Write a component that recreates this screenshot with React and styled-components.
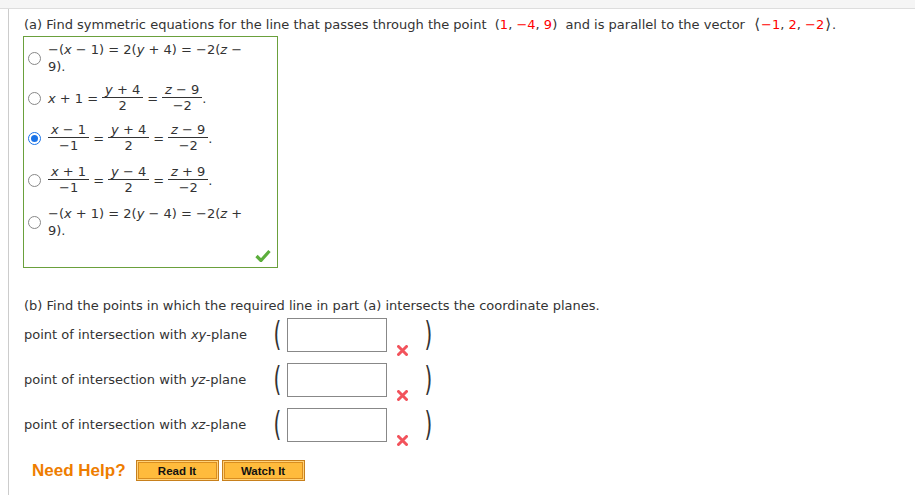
import React from 'react';
import styled, { createGlobalStyle } from 'styled-components';

const GlobalStyle = createGlobalStyle`
  body {
    margin: 0;
    background: #fff;
    font-family: 'DejaVu Sans', Verdana, sans-serif;
    font-size: 13px;
    color: #333;
  }
`;

const TopStrip = styled.div`
  height: 8px;
  background: #f5f5f5;
  border-bottom: 1px solid #ddd;
`;

const Main = styled.div`
  margin-left: 8px;
  border-left: 1px solid #ccc;
  padding: 7px 0 14px 15px;
`;

const Prompt = styled.div`
  line-height: 17px;
  margin-bottom: 3px;
  .red {
    color: #f00;
  }
  .angle {
    font-size: 15px;
    padding: 0 1px;
  }
`;

const ChoiceBox = styled.div`
  width: 250px;
  height: 227px;
  margin-left: -1px;
  border: 1px solid #6aa03c;
  padding: 3px 0 0 3px;
  position: relative;
`;

const Choice = styled.div`
  display: flex;
  align-items: center;
  min-height: ${(p) => p.h}px;
  margin-top: ${(p) => p.gap}px;
`;

const Radio = styled.span`
  flex: none;
  width: 11px;
  height: 11px;
  border-radius: 50%;
  border: 1px solid ${(p) => (p.checked ? '#1a73e8' : '#888')};
  background: #fff;
  margin: 0 7px 0 1px;
  position: relative;
  ${(p) =>
    p.checked &&
    `
    &::after {
      content: '';
      position: absolute;
      left: 2px;
      top: 2px;
      width: 7px;
      height: 7px;
      border-radius: 50%;
      background: #1a73e8;
    }
  `}
`;

const Wrapped = styled.div`
  line-height: 17px;
  width: 206px;
`;

const Eq = styled.div`
  display: flex;
  align-items: center;
  line-height: 15px;
`;

const Frac = styled.span`
  display: inline-flex;
  flex-direction: column;
  align-items: stretch;
  text-align: center;
  line-height: 14px;
  span {
    padding: 0 3px;
  }
  span + span {
    border-top: 1px solid #333;
    padding-top: 1px;
  }
`;

const Op = styled.span`
  padding: 0 4px;
`;

const V = styled.i`
  font-style: italic;
`;

const Check = styled.svg`
  position: absolute;
  right: 6px;
  bottom: 5px;
`;

const PartB = styled.div`
  margin-top: 29px;
  line-height: 17px;
`;

const Row = styled.div`
  display: flex;
  align-items: center;
  height: 35px;
  margin-top: ${(p) => (p.first ? 3 : 10)}px;
`;

const Label = styled.div`
  width: 247px;
`;

const Paren = styled.span`
  font-size: 33px;
  line-height: 35px;
  transform: scaleX(0.6);
  color: #333;
`;

const Input = styled.div`
  width: 98px;
  height: 32px;
  border: 1px solid #888;
  margin-left: 3px;
`;

const Wrong = styled.svg`
  align-self: flex-end;
  margin: 0 14px -4px 10px;
`;

const HelpBar = styled.div`
  display: flex;
  align-items: center;
  margin-top: 18px;
  padding-left: 8px;
`;

const NeedHelp = styled.span`
  font-family: 'Liberation Sans', Arial, sans-serif;
  font-weight: bold;
  font-size: 17px;
  color: #ee7d00;
  margin-right: 10px;
`;

const HelpButton = styled.span`
  width: 81px;
  height: 19px;
  border: 1px solid #c8801c;
  box-shadow: inset 0 0 0 1px #ffd27a, inset 0 0 0 2px #d98d20;
  background: #ffbb3c;
  font-family: 'Liberation Sans', Arial, sans-serif;
  font-weight: bold;
  font-size: 11.5px;
  color: #111;
  display: flex;
  align-items: center;
  justify-content: center;
  margin-right: 3px;
`;

const WrongMark = () => (
  <Wrong width="11" height="11" viewBox="0 0 11 11">
    <path d="M1.5 1.5 L9.5 9.5 M9.5 1.5 L1.5 9.5" stroke="#f2535c" strokeWidth="3" strokeLinecap="round" />
  </Wrong>
);

const FracEq = ({ parts }) => (
  <Eq>
    {parts.map(([num, den], i) => (
      <React.Fragment key={i}>
        {i > 0 && <Op>=</Op>}
        <Frac>
          <span>{num}</span>
          <span>{den}</span>
        </Frac>
      </React.Fragment>
    ))}
    .
  </Eq>
);

const planes = ['xy', 'yz', 'xz'];

export default function App() {
  return (
    <>
      <GlobalStyle />
      <TopStrip />
      <Main>
        <Prompt>
          (a) Find symmetric equations for the line that passes through the point&nbsp; (<span className="red">1</span>,{' '}
          <span className="red">−4</span>, <span className="red">9</span>)&nbsp; and is parallel to the vector&nbsp; <span className="angle">⟨</span>
          <span className="red">−1</span>, <span className="red">2</span>, <span className="red">−2</span><span className="angle">⟩</span>.
        </Prompt>
        <ChoiceBox>
          <Choice h={34} gap={1}>
            <Radio />
            <Wrapped>
              −(<V>x</V> − 1) = 2(<V>y</V> + 4) = −2(<V>z</V> − 9).
            </Wrapped>
          </Choice>
          <Choice h={30} gap={8}>
            <Radio />
            <Eq>
              <V>x</V>&nbsp;+ 1<Op>=</Op>
              <Frac>
                <span><V>y</V> + 4</span>
                <span>2</span>
              </Frac>
              <Op>=</Op>
              <Frac>
                <span><V>z</V> − 9</span>
                <span>−2</span>
              </Frac>
              .
            </Eq>
          </Choice>
          <Choice h={30} gap={10}>
            <Radio checked />
            <FracEq
              parts={[
                [<><V>x</V> − 1</>, '−1'],
                [<><V>y</V> + 4</>, '2'],
                [<><V>z</V> − 9</>, '−2'],
              ]}
            />
          </Choice>
          <Choice h={30} gap={12}>
            <Radio />
            <FracEq
              parts={[
                [<><V>x</V> + 1</>, '−1'],
                [<><V>y</V> − 4</>, '2'],
                [<><V>z</V> + 9</>, '−2'],
              ]}
            />
          </Choice>
          <Choice h={34} gap={10}>
            <Radio />
            <Wrapped>
              −(<V>x</V> + 1) = 2(<V>y</V> − 4) = −2(<V>z</V> + 9).
            </Wrapped>
          </Choice>
          <Check width="16" height="13" viewBox="0 0 16 13">
            <path d="M1.5 7 L6 11.5 L14.5 2" fill="none" stroke="#5cae3c" strokeWidth="3.2" strokeLinejoin="round" />
          </Check>
        </ChoiceBox>
        <PartB>(b) Find the points in which the required line in part (a) intersects the coordinate planes.</PartB>
        {planes.map((p, i) => (
          <Row key={p} first={i === 0}>
            <Label>
              point of intersection with <V>{p}</V>-plane
            </Label>
            <Paren>(</Paren>
            <Input />
            <WrongMark />
            <Paren>)</Paren>
          </Row>
        ))}
        <HelpBar>
          <NeedHelp>Need Help?</NeedHelp>
          <HelpButton>Read It</HelpButton>
          <HelpButton>Watch It</HelpButton>
        </HelpBar>
      </Main>
    </>
  );
}
